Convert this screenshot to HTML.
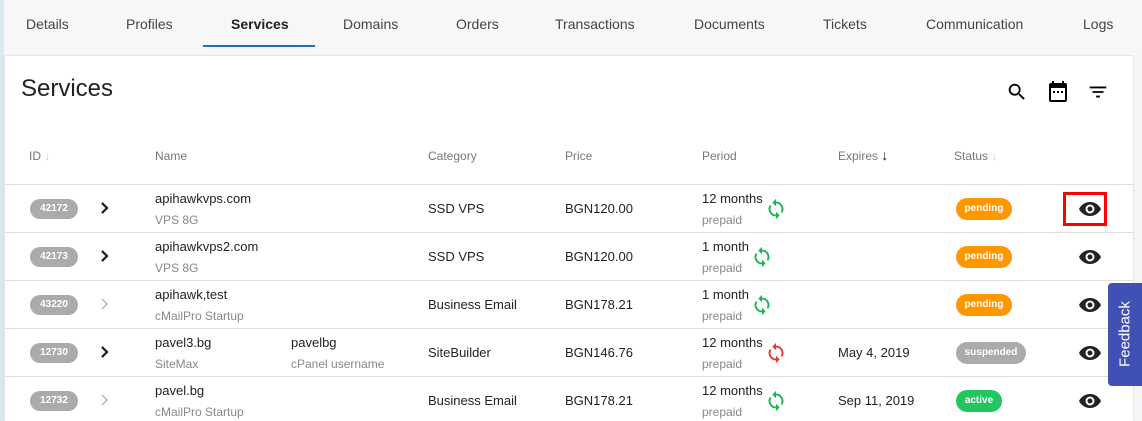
<!DOCTYPE html>
<html><head><style>
*{margin:0;padding:0;box-sizing:border-box}
html,body{width:1142px;height:421px;overflow:hidden}
body{background:#f6f6f6;font-family:"Liberation Sans",Arial,sans-serif;position:relative;color:#212121}
.lstrip{position:absolute;left:0;top:0;width:4px;height:421px;background:#dce8ef}
.tabs{position:absolute;left:4px;top:0;width:1138px;height:55px;background:#f7f7f7}
.tab{position:absolute;top:16px;font-size:14px;color:#444}
.tab.act{color:#212121;font-weight:bold}
.ul{position:absolute;left:203px;top:45px;width:112px;height:2px;background:#1a73b5}
.card{position:absolute;left:5px;top:56px;width:1128px;height:365px;background:#fff;box-shadow:0 0 2px rgba(0,0,0,.2)}
h1{position:absolute;left:21px;top:75px;font-size:24px;font-weight:normal;color:#222}
.hd{position:absolute;top:149px;font-size:12px;color:#777}
.row{position:absolute;left:5px;width:1128px;height:48px;border-top:1px solid #e0e0e0}
.id{position:absolute;left:25px;top:14px;width:48px;height:20px;border-radius:10px;background:#ababab;color:#fff;font-size:10px;font-weight:bold;text-align:center;line-height:20px}
.chev{position:absolute;left:94px;top:15px}
.t1{position:absolute;top:6px;font-size:13px;color:#222}
.t2{position:absolute;top:28px;font-size:12px;color:#888}
.mid{position:absolute;top:16px;font-size:13px;color:#222}
.st{position:absolute;left:951px;top:13px;height:22px;border-radius:11px;color:#fff;font-size:10px;font-weight:bold;text-align:center;line-height:22px}
.eye{position:absolute;left:1073px;top:15px}
.fb{position:absolute;left:1108px;top:283px;width:34px;height:103px;background:#3f51b5;border-radius:4px 0 0 4px}
.fb span{position:absolute;left:17px;top:51px;transform:translate(-50%,-50%) rotate(-90deg);color:#fff;font-size:15px;white-space:nowrap}
</style></head><body>
<div class="lstrip"></div>
<div class="tabs"></div>
<div class="tab" style="left:26px">Details</div>
<div class="tab" style="left:126px">Profiles</div>
<div class="tab act" style="left:231px">Services</div>
<div class="tab" style="left:343px">Domains</div>
<div class="tab" style="left:456px">Orders</div>
<div class="tab" style="left:555px">Transactions</div>
<div class="tab" style="left:694px">Documents</div>
<div class="tab" style="left:823px">Tickets</div>
<div class="tab" style="left:926px">Communication</div>
<div class="tab" style="left:1083px">Logs</div>
<div class="ul"></div>
<div class="card"></div>
<h1>Services</h1>
<svg style="position:absolute;left:1006px;top:81px" width="22" height="22" viewBox="0 0 24 24"><path d="M15.5 14h-.8l-.3-.3A6.5 6.5 0 1 0 9.5 16a6.5 6.5 0 0 0 4.2-1.6l.3.3v.8l5 5 1.5-1.5-5-5zm-6 0a4.5 4.5 0 1 1 0-9 4.5 4.5 0 0 1 0 9z"/></svg>
<svg style="position:absolute;left:1046px;top:80px" width="24" height="24" viewBox="0 0 24 24"><path d="M6 1h2v2h8V1h2v2h1a2 2 0 0 1 2 2v15a2 2 0 0 1-2 2H5a2 2 0 0 1-2-2V5a2 2 0 0 1 2-2h1zM5 8v12h14V8zm2 3h2v2H7zm4 0h2v2h-2zm4 0h2v2h-2z"/></svg>
<svg style="position:absolute;left:1087px;top:81px" width="22" height="22" viewBox="0 0 24 24"><path d="M3 6h18v2H3zm3 5h12v2H6zm4 5h4v2h-4z"/></svg>
<div class="hd" style="left:29px">ID <span style="color:#ccc">↓</span></div>
<div class="hd" style="left:155px">Name</div>
<div class="hd" style="left:428px">Category</div>
<div class="hd" style="left:565px">Price</div>
<div class="hd" style="left:702px">Period</div>
<div class="hd" style="left:838px;top:147px">Expires <span style="color:#111;font-size:14px">↓</span></div>
<div class="hd" style="left:954px">Status <span style="color:#ccc">↓</span></div>

<div class="row" style="top:184px"><div class="id">42172</div><svg class="chev" width="12" height="16" viewBox="0 0 12 16"><path d="M3 3l5 5-5 5" stroke="#111" stroke-width="2.2" fill="none"/></svg><div class="t1" style="left:150px">apihawkvps.com</div><div class="t2" style="left:150px">VPS 8G</div><div class="mid" style="left:423px">SSD VPS</div><div class="mid" style="left:560px">BGN120.00</div><div class="t1" style="left:697px">12 months</div><div class="t2" style="left:697px">prepaid</div><svg style="position:absolute;left:760px;top:13px" width="22" height="22" viewBox="0 0 24 24"><path d="M12 4V1L8 5l4 4V6a6 6 0 0 1 5.2 9l1.5 1.5A8 8 0 0 0 12 4zm0 14a6 6 0 0 1-5.2-9L5.3 7.5A8 8 0 0 0 12 20v3l4-4-4-4z" fill="#1fb255"/></svg><div class="st" style="background:#ff9800;width:56px">pending</div><div style="position:absolute;left:1058px;top:7px;width:44px;height:34px;border:3px solid #f00"></div><svg class="eye" width="24" height="18" viewBox="0 0 24 18"><path d="M12 2C7 2 3 5 1 9c2 4 6 7 11 7s9-3 11-7c-2-4-6-7-11-7zm0 11.5a4.5 4.5 0 1 1 0-9 4.5 4.5 0 0 1 0 9zm0-7a2.5 2.5 0 1 0 0 5 2.5 2.5 0 0 0 0-5z" fill="#222"/></svg></div>

<div class="row" style="top:232px"><div class="id">42173</div><svg class="chev" width="12" height="16" viewBox="0 0 12 16"><path d="M3 3l5 5-5 5" stroke="#111" stroke-width="2.2" fill="none"/></svg><div class="t1" style="left:150px">apihawkvps2.com</div><div class="t2" style="left:150px">VPS 8G</div><div class="mid" style="left:423px">SSD VPS</div><div class="mid" style="left:560px">BGN120.00</div><div class="t1" style="left:697px">1 month</div><div class="t2" style="left:697px">prepaid</div><svg style="position:absolute;left:746px;top:13px" width="22" height="22" viewBox="0 0 24 24"><path d="M12 4V1L8 5l4 4V6a6 6 0 0 1 5.2 9l1.5 1.5A8 8 0 0 0 12 4zm0 14a6 6 0 0 1-5.2-9L5.3 7.5A8 8 0 0 0 12 20v3l4-4-4-4z" fill="#1fb255"/></svg><div class="st" style="background:#ff9800;width:56px">pending</div><svg class="eye" width="24" height="18" viewBox="0 0 24 18"><path d="M12 2C7 2 3 5 1 9c2 4 6 7 11 7s9-3 11-7c-2-4-6-7-11-7zm0 11.5a4.5 4.5 0 1 1 0-9 4.5 4.5 0 0 1 0 9zm0-7a2.5 2.5 0 1 0 0 5 2.5 2.5 0 0 0 0-5z" fill="#222"/></svg></div>

<div class="row" style="top:280px"><div class="id">43220</div><svg class="chev" width="12" height="16" viewBox="0 0 12 16"><path d="M3 3l5 5-5 5" stroke="#bbb" stroke-width="1.6" fill="none"/></svg><div class="t1" style="left:150px">apihawk,test</div><div class="t2" style="left:150px">cMailPro Startup</div><div class="mid" style="left:423px">Business Email</div><div class="mid" style="left:560px">BGN178.21</div><div class="t1" style="left:697px">1 month</div><div class="t2" style="left:697px">prepaid</div><svg style="position:absolute;left:746px;top:13px" width="22" height="22" viewBox="0 0 24 24"><path d="M12 4V1L8 5l4 4V6a6 6 0 0 1 5.2 9l1.5 1.5A8 8 0 0 0 12 4zm0 14a6 6 0 0 1-5.2-9L5.3 7.5A8 8 0 0 0 12 20v3l4-4-4-4z" fill="#1fb255"/></svg><div class="st" style="background:#ff9800;width:56px">pending</div><svg class="eye" width="24" height="18" viewBox="0 0 24 18"><path d="M12 2C7 2 3 5 1 9c2 4 6 7 11 7s9-3 11-7c-2-4-6-7-11-7zm0 11.5a4.5 4.5 0 1 1 0-9 4.5 4.5 0 0 1 0 9zm0-7a2.5 2.5 0 1 0 0 5 2.5 2.5 0 0 0 0-5z" fill="#222"/></svg></div>

<div class="row" style="top:328px"><div class="id">12730</div><svg class="chev" width="12" height="16" viewBox="0 0 12 16"><path d="M3 3l5 5-5 5" stroke="#111" stroke-width="2.2" fill="none"/></svg><div class="t1" style="left:150px">pavel3.bg</div><div class="t2" style="left:150px">SiteMax</div><div class="t1" style="left:286px">pavelbg</div><div class="t2" style="left:286px">cPanel username</div><div class="mid" style="left:423px">SiteBuilder</div><div class="mid" style="left:560px">BGN146.76</div><div class="t1" style="left:697px">12 months</div><div class="t2" style="left:697px">prepaid</div><svg style="position:absolute;left:760px;top:13px" width="22" height="22" viewBox="0 0 24 24"><path d="M12 4V1L8 5l4 4V6a6 6 0 0 1 5.2 9l1.5 1.5A8 8 0 0 0 12 4zm0 14a6 6 0 0 1-5.2-9L5.3 7.5A8 8 0 0 0 12 20v3l4-4-4-4z" fill="#e53935"/></svg><div class="mid" style="left:833px">May 4, 2019</div><div class="st" style="background:#ababab;width:70px">suspended</div><svg class="eye" width="24" height="18" viewBox="0 0 24 18"><path d="M12 2C7 2 3 5 1 9c2 4 6 7 11 7s9-3 11-7c-2-4-6-7-11-7zm0 11.5a4.5 4.5 0 1 1 0-9 4.5 4.5 0 0 1 0 9zm0-7a2.5 2.5 0 1 0 0 5 2.5 2.5 0 0 0 0-5z" fill="#222"/></svg></div>

<div class="row" style="top:376px"><div class="id">12732</div><svg class="chev" width="12" height="16" viewBox="0 0 12 16"><path d="M3 3l5 5-5 5" stroke="#bbb" stroke-width="1.6" fill="none"/></svg><div class="t1" style="left:150px">pavel.bg</div><div class="t2" style="left:150px">cMailPro Startup</div><div class="mid" style="left:423px">Business Email</div><div class="mid" style="left:560px">BGN178.21</div><div class="t1" style="left:697px">12 months</div><div class="t2" style="left:697px">prepaid</div><svg style="position:absolute;left:760px;top:13px" width="22" height="22" viewBox="0 0 24 24"><path d="M12 4V1L8 5l4 4V6a6 6 0 0 1 5.2 9l1.5 1.5A8 8 0 0 0 12 4zm0 14a6 6 0 0 1-5.2-9L5.3 7.5A8 8 0 0 0 12 20v3l4-4-4-4z" fill="#1fb255"/></svg><div class="mid" style="left:833px">Sep 11, 2019</div><div class="st" style="background:#22c55e;width:46px">active</div><svg class="eye" width="24" height="18" viewBox="0 0 24 18"><path d="M12 2C7 2 3 5 1 9c2 4 6 7 11 7s9-3 11-7c-2-4-6-7-11-7zm0 11.5a4.5 4.5 0 1 1 0-9 4.5 4.5 0 0 1 0 9zm0-7a2.5 2.5 0 1 0 0 5 2.5 2.5 0 0 0 0-5z" fill="#222"/></svg></div>

<div class="fb"><span>Feedback</span></div>
</body></html>
